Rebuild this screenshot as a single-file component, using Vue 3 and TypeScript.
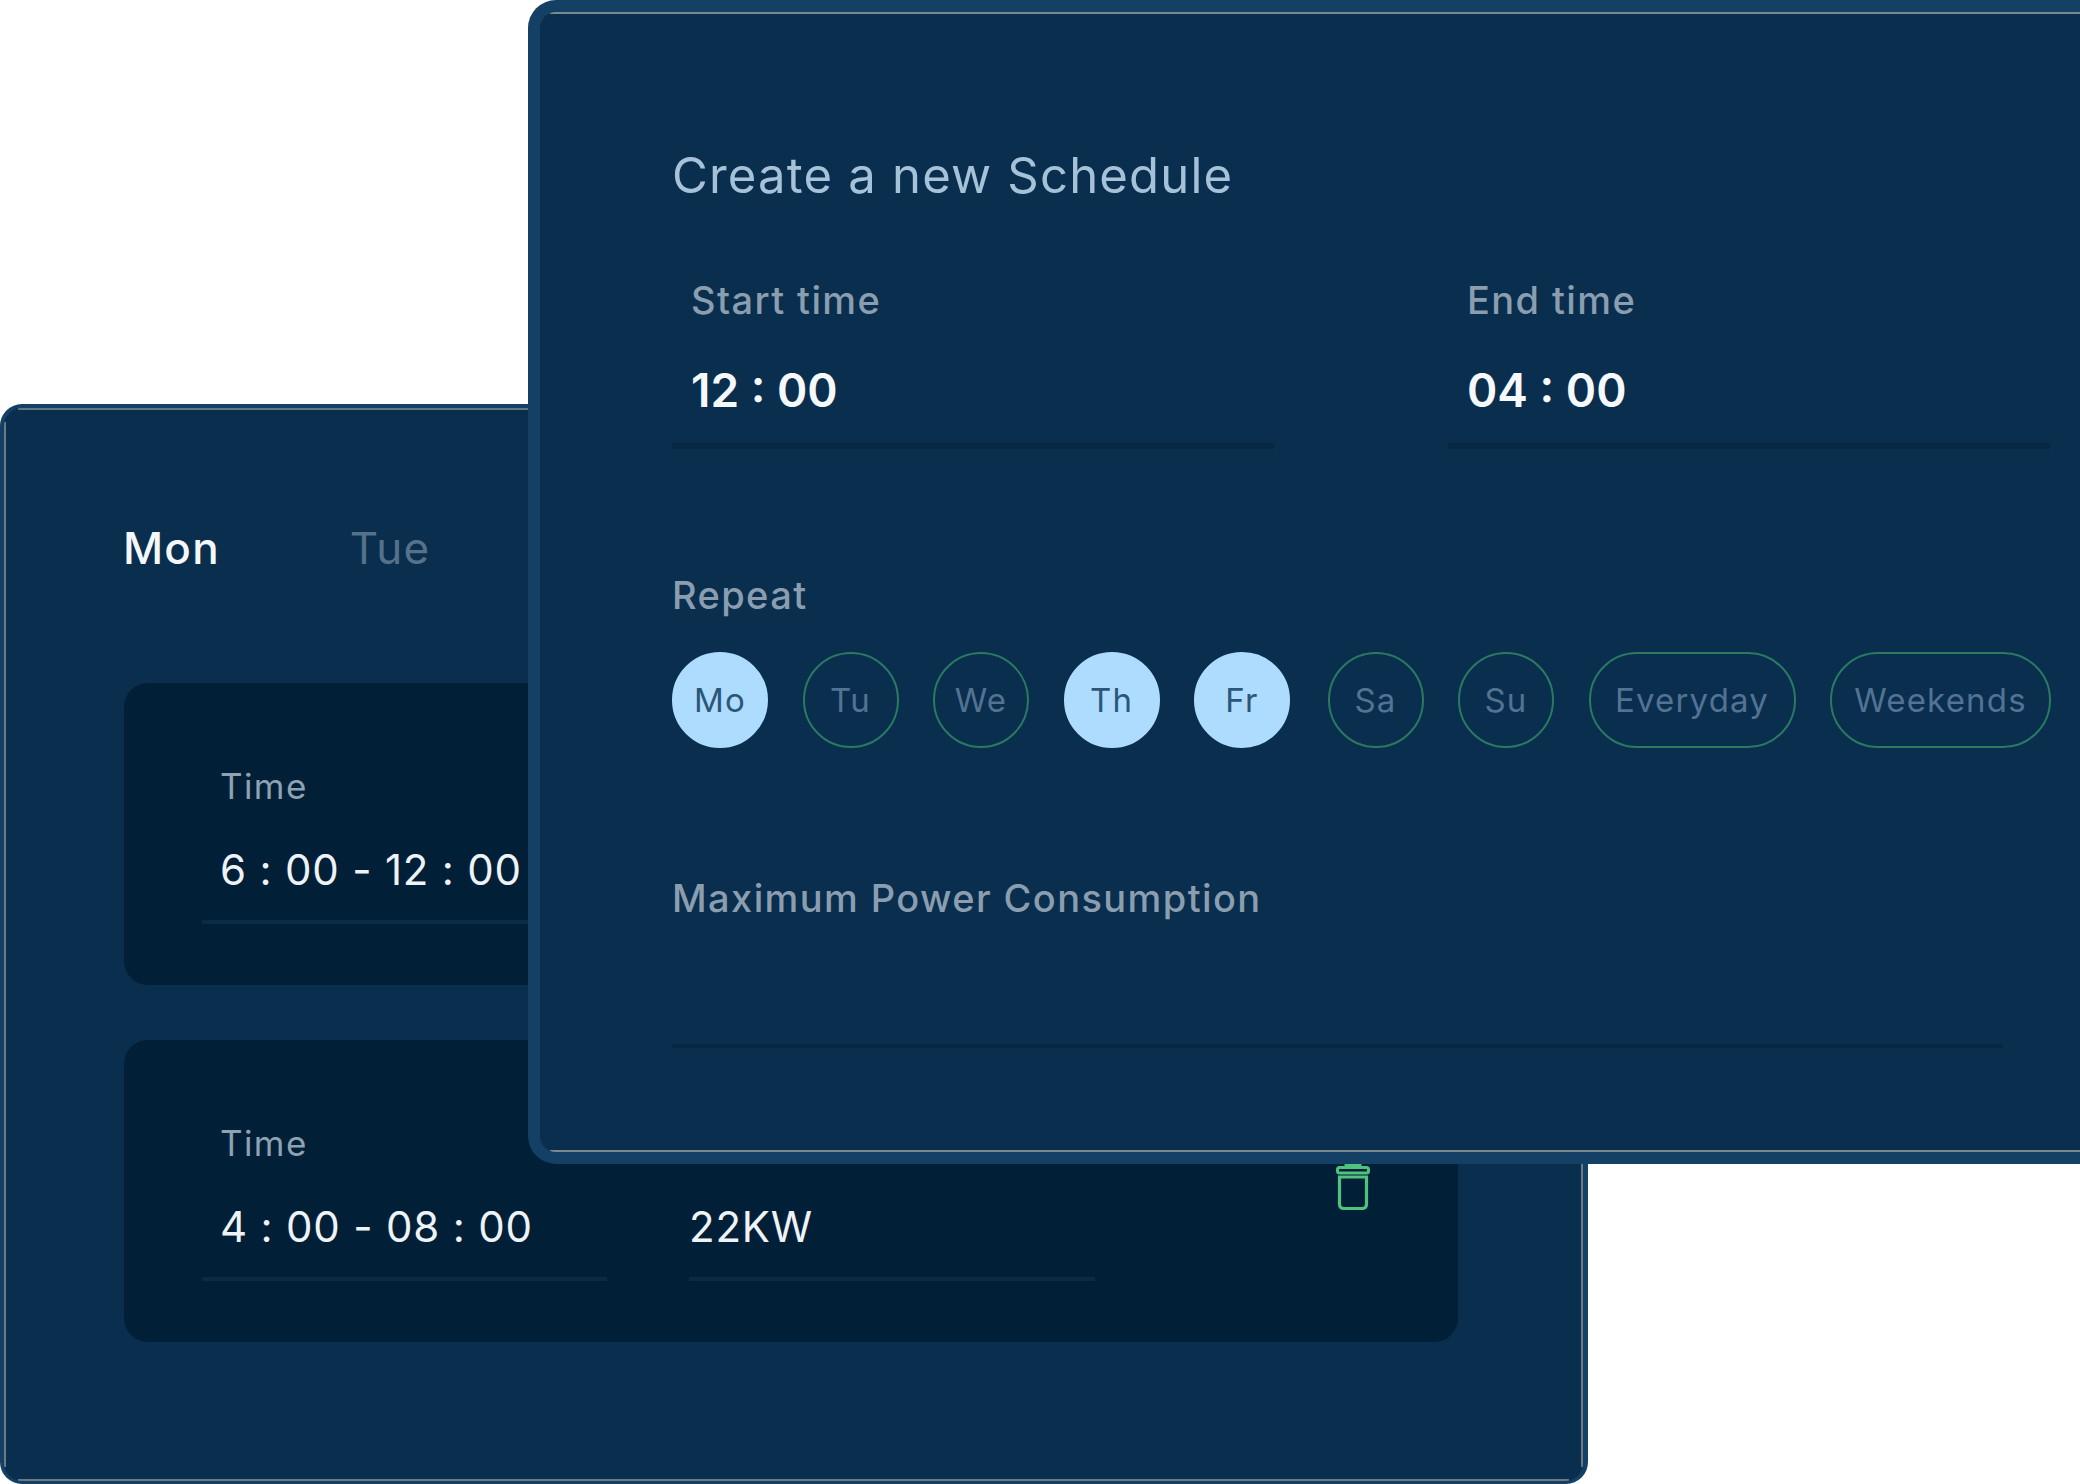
<script setup lang="ts">
type Slot = { time: string; power?: string }
type Chip = { label: string; active?: boolean; wide?: boolean }

const slots: Slot[] = [
  { time: '6 : 00 - 12 : 00' },
  { time: '4 : 00 - 08 : 00', power: '22KW' },
]

const chips: Chip[] = [
  { label: 'Mo', active: true },
  { label: 'Tu' },
  { label: 'We' },
  { label: 'Th', active: true },
  { label: 'Fr', active: true },
  { label: 'Sa' },
  { label: 'Su' },
  { label: 'Everyday', wide: true },
  { label: 'Weekends', wide: true },
]
</script>

<template>
  <div class="stage">
    <section class="card back">
      <div class="panel back-panel">
        <nav class="tabs">
          <span class="tab tab-on">Mon</span>
          <span class="tab">Tue</span>
        </nav>
        <div v-for="s in slots" :key="s.time" class="slot">
          <div class="slot-field slot-time">
            <div class="slot-label">Time</div>
            <div class="slot-value">{{ s.time }}</div>
          </div>
          <template v-if="s.power">
            <div class="slot-field slot-power">
              <div class="slot-value">{{ s.power }}</div>
            </div>
            <svg class="trash" width="34" height="46" viewBox="0 0 34 46" fill="none" stroke="#4fc27e">
              <path d="M10 3 V1.5 H24 V3" stroke-width="3" />
              <rect x="1.5" y="3.5" width="31" height="5.5" rx="2" stroke-width="3" />
              <path d="M3.5 13 H30.5 V40 Q30.5 44.5 26 44.5 H8 Q3.5 44.5 3.5 40 Z" stroke-width="3.2" />
            </svg>
          </template>
        </div>
      </div>
    </section>

    <section class="card front">
      <div class="panel front-panel">
        <h2 class="title">Create a new Schedule</h2>
        <div class="times">
          <div class="field">
            <div class="label">Start time</div>
            <div class="value">12 : 00</div>
          </div>
          <div class="field">
            <div class="label">End time</div>
            <div class="value">04 : 00</div>
          </div>
        </div>
        <div class="label repeat">Repeat</div>
        <div class="chips">
          <span
            v-for="c in chips"
            :key="c.label"
            :class="['chip', c.active ? 'chip-on' : '', c.wide ? 'chip-wide' : '']"
          >{{ c.label }}</span>
        </div>
        <div class="label power">Maximum Power Consumption</div>
        <div class="power-line"></div>
      </div>
    </section>
  </div>
</template>

<style scoped>
.stage {
  position: relative;
  width: 2080px;
  height: 1484px;
  overflow: hidden;
  font-family: Inter, 'Noto Sans', sans-serif;
}

.card {
  box-sizing: border-box;
  background: #134064;
}

.panel {
  box-sizing: border-box;
  height: 100%;
  background-color: #0a2e4e;
  background-repeat: no-repeat;
}

.back {
  width: 1588px;
  height: 1080px;
  margin-top: 404px;
  padding: 4px 5px 3px 4px;
  border-radius: 22px;
}

.back-panel {
  padding: 115px 0 0 120px;
  background-image:
    linear-gradient(#5f7684, #5f7684),
    linear-gradient(#6c7a84, #6c7a84),
    linear-gradient(#6c7a84, #6c7a84),
    linear-gradient(#6c7a84, #6c7a84);
  background-size:
    calc(100% - 28px) 2px,
    calc(100% - 28px) 2px,
    2px calc(100% - 28px),
    2px calc(100% - 28px);
  background-position: center top, center bottom, left center, right center;
  border-radius: 18px;
}

.front {
  position: absolute;
  left: 528px;
  top: 0;
  width: 1600px;
  height: 1164px;
  padding: 12px 0 12px 12px;
  border-radius: 28px;
}

.front-panel {
  padding: 134px 0 0 132px;
  background-image:
    linear-gradient(#7a8a8c, #7a8a8c),
    linear-gradient(#7a8a8c, #7a8a8c);
  background-size: calc(100% - 10px) 2px, calc(100% - 10px) 2px;
  background-position: right top, right bottom;
  border-radius: 16px;
}

.tabs {
  display: flex;
  gap: 130px;
  margin: 0 0 110px -1px;
  height: 50px;
  align-items: center;
}

.tab {
  font-size: 44px;
  line-height: 50px;
  letter-spacing: 1.2px;
  color: #55728c;
}

.tab-on {
  color: #f4f8fb;
  font-weight: 500;
}

.slot {
  box-sizing: border-box;
  display: flex;
  align-items: flex-start;
  width: 1334px;
  height: 302px;
  margin-bottom: 55px;
  padding: 83px 88px 0 78px;
  background: #021f38;
  border-radius: 24px;
}

.slot-field {
  box-sizing: border-box;
  width: 405px;
  border-bottom: 4px solid #0a2b46;
}

.slot-time {
  padding-left: 18px;
}

.slot-power {
  width: 406px;
  margin: 79px 0 0 82px;
}

.slot-label {
  height: 40px;
  margin-bottom: 39px;
  font-size: 35px;
  line-height: 40px;
  letter-spacing: 1.4px;
  color: #8ea2b4;
}

.slot-value {
  height: 50px;
  padding-bottom: 25px;
  font-size: 42px;
  line-height: 50px;
  letter-spacing: 0.8px;
  color: #eef3f7;
}

.trash {
  margin: 41px 0 0 auto;
}

.title {
  margin: 0 0 74px;
  height: 60px;
  font-size: 49px;
  font-weight: 400;
  line-height: 60px;
  letter-spacing: 1.2px;
  color: #a6c2d8;
}

.times {
  display: flex;
  gap: 174px;
}

.field {
  box-sizing: border-box;
  width: 602px;
  padding-left: 19px;
  border-bottom: 6px solid #072842;
}

.label {
  height: 40px;
  font-size: 38px;
  font-weight: 500;
  line-height: 40px;
  letter-spacing: 1.4px;
  color: #8a9eb0;
}

.value {
  height: 50px;
  margin-top: 45px;
  padding-bottom: 28px;
  font-size: 46px;
  font-weight: 600;
  line-height: 50px;
  color: #f6f9fb;
}

.repeat {
  margin-top: 126px;
}

.chips {
  display: flex;
  gap: 34.5px;
  margin-top: 37px;
}

.chip {
  box-sizing: border-box;
  display: flex;
  flex: none;
  align-items: center;
  justify-content: center;
  width: 96px;
  height: 96px;
  border: 2px solid #2a7a62;
  border-radius: 48px;
  font-size: 33px;
  letter-spacing: 1.2px;
  color: #527393;
}

.chip:nth-child(5) {
  margin-right: 3px;
}

.chip-on {
  background: #aedcff;
  border-color: #aedcff;
  color: #2c5678;
}

.chip-wide {
  width: 207px;
}

.chip-wide:last-child {
  width: 221px;
}

.power {
  margin-top: 130px;
}

.power-line {
  width: 1331px;
  height: 126px;
  border-bottom: 4px solid #072842;
}
</style>

<style>
body {
  background: #fff;
}
</style>
